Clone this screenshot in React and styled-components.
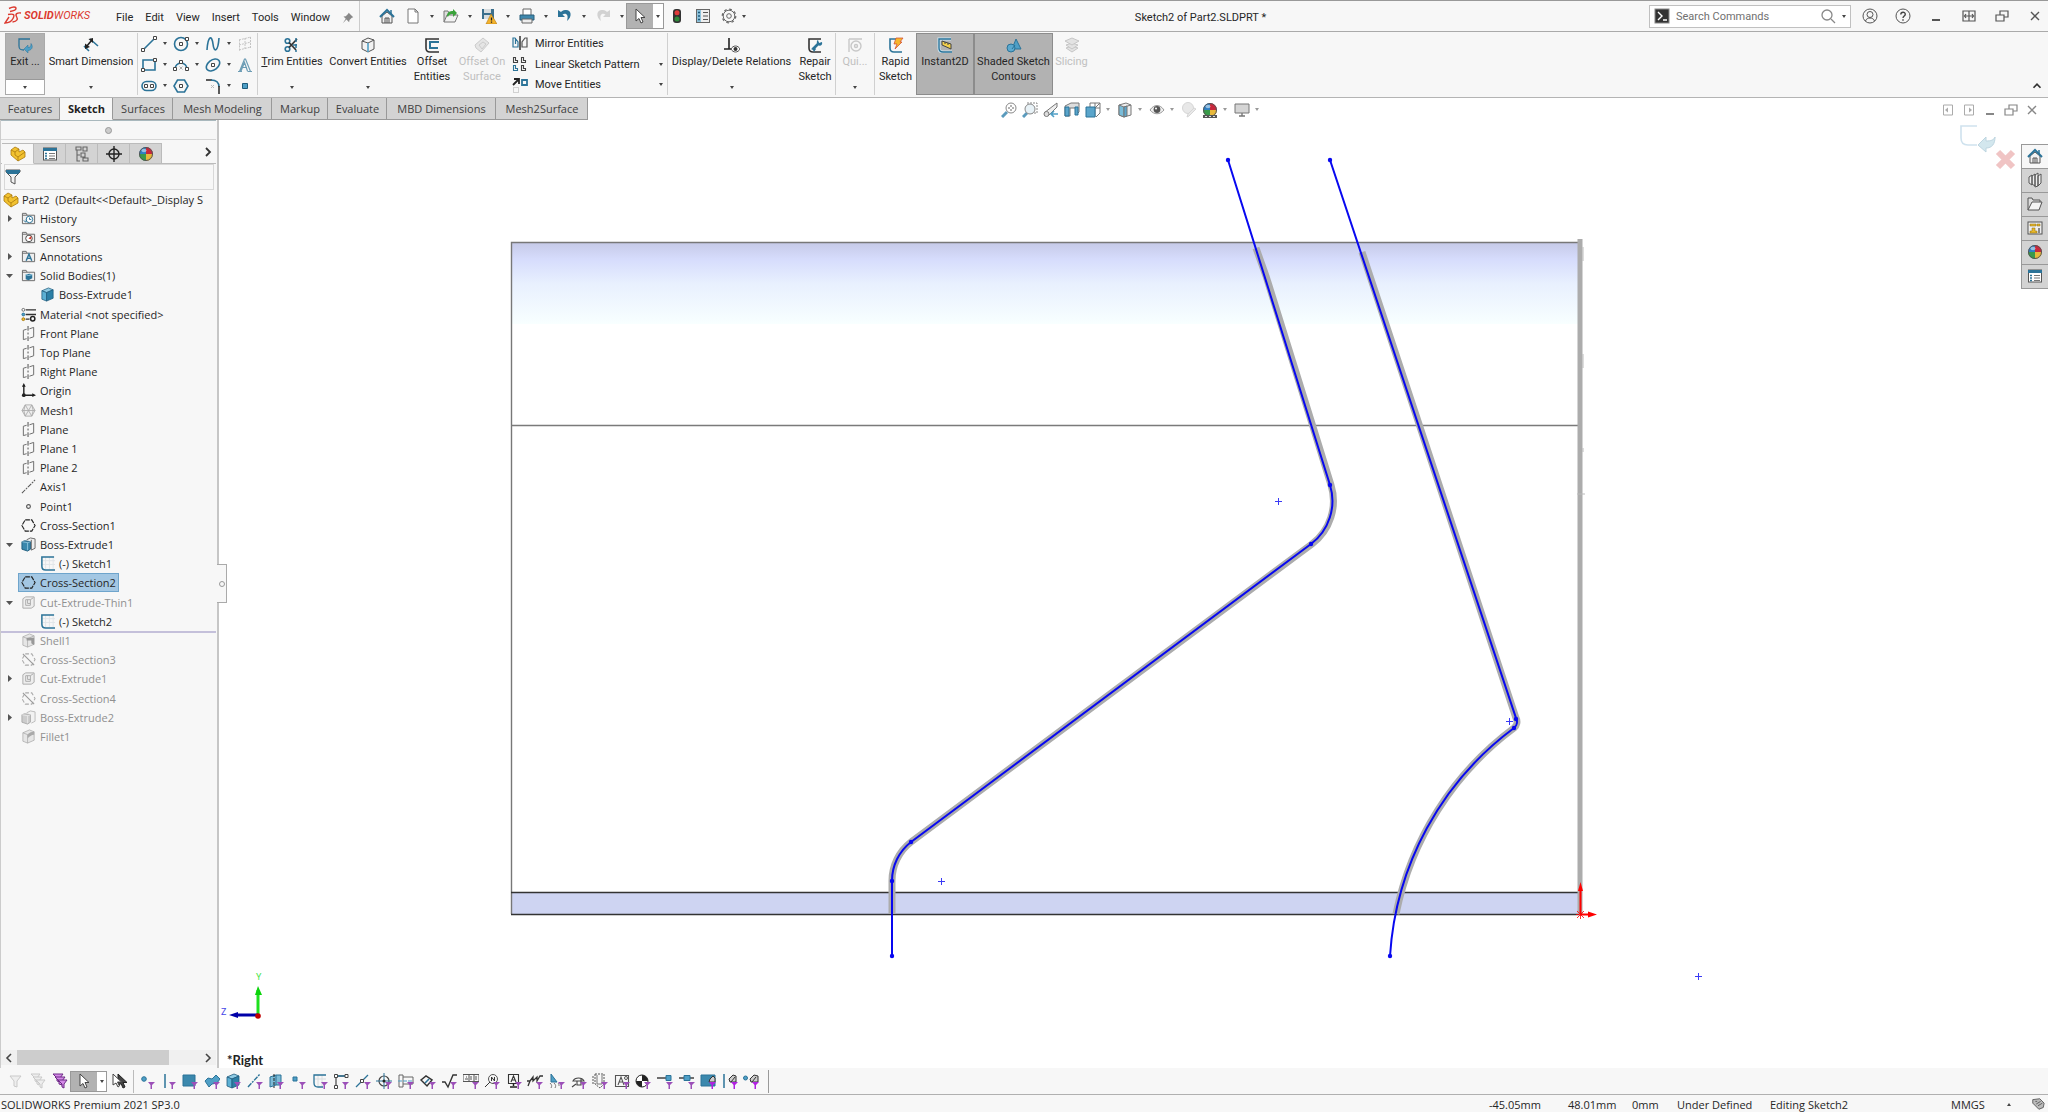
import React, { useState } from "react";
import styled, { createGlobalStyle, css } from "styled-components";

const BLUE = "#2b7398";
const SKY = "#4f9fc6";
const DARK = "#444";
const RIBBON_FONT = `Roboto, "Noto Sans", sans-serif`;
const UI_FONT = `"Open Sans", "Noto Sans", sans-serif`;

// every drawing lives on a 16x16 grid
const line = (stroke = DARK, strokeWidth = 1) => ({
  fill: "none",
  stroke,
  strokeWidth,
});

const hexagon = "M4.5 2h7L15 8l-3.5 6h-7L1 8z";
const planePath = "M2 4l6-2v10l-6 2z M8 2h5v10H8";
const funnel = <path d="M9 9h7l-3 3v4h-1.5v-4z" fill="#9b4fb8" />;
const vividFunnel = <path d="M9 9h7l-3 3v4h-1.5v-4z" fill="#b020e0" />;
const folder = (
  <path d="M1.500 13.500v-11h4l1 2h8v9z M1.500 4.500h5" fill="#eee" stroke="#666" />
);
const ball = (
  <g>
    <path d="M8 8V1a7 7 0 0 1 7 7z" fill="#c8283c" />
    <path d="M8 8h7a7 7 0 0 1-7 7z" fill="#e8b83a" />
    <path d="M8 8v7a7 7 0 0 1-7-7z" fill="#3a9a4a" />
    <path d="M8 8H1a7 7 0 0 1 7-7z" fill="#2f80c4" />
    <circle cx="8" cy="8" r="6.500" {...line("#555")} />
    <ellipse cx="6" cy="4.500" rx="2.500" ry="1.800" fill="#fff" opacity="0.5" />
  </g>
);
const cube = (
  <g stroke="#1f5c7d" strokeWidth="0.8">
    <path d="M2 4l7-3 5 2-7 3z" fill="#8fcbe4" />
    <path d="M2 4l5 2v9l-5-2z" fill="#5cb0d4" />
    <path d="M7 6l7-3v9l-7 3z" fill="#2c7fa6" />
  </g>
);
const part = (
  <g stroke="#a9780c" strokeWidth="0.8">
    <path d="M1 4l4-3 4 2v3l4-2 2 2v5l-7 4-7-6z" fill="#f2c230" />
    <path d="M1 4l4 2v3l3 2v4M5 6l4-3M8 11l7-5" fill="none" />
  </g>
);
const house = (
  <g>
    <path d="M3 8v7h10V8L8 4z" fill="#f2f2f2" stroke="#555" />
    <path d="M6 15v-5h4v5M8 10v5" {...line("#555")} />
    <path d="M1 9l7-7 7 7" {...line(BLUE, 2)} />
    <path d="M12 2v4" {...line(BLUE, 1.5)} />
  </g>
);
const boxGrey = (
  <g stroke="#aaa" strokeWidth="0.8">
    <path d="M2 4l7-3 5 2v9l-7 3-5-2z" fill="#e6e6e6" />
    <path d="M2 4l5 2v9M7 6l7-3" fill="none" />
  </g>
);

const ICONS = {
  home: house,
  newDoc: (
    <path d="M3 1h7l3 3v11H3z M10 1v3h3" fill="#fff" stroke="#777" />
  ),
  open: (
    <g>
      <path d="M1 14V3h4l1 2h6v2" fill="#ddd" stroke="#777" />
      <path d="M1 14l3-7h11l-3 7z" fill="#f2f2f2" stroke="#777" />
      <path d="M4 8c0-4 3-5 6-5V1l4 4-4 4V6C8 6 6 6 5 9z" fill="#3aa23a" />
    </g>
  ),
  save: (
    <g>
      <path d="M1 1h12v10H1z" fill="#3b6f8d" />
      <path d="M3 1h7v4H3z M3 7h7v4H3z" fill="#d8dde0" />
      <path d="M10 6l6 10H5z" fill="#f4b32c" stroke="#b67b10" strokeWidth="0.6" />
      <path d="M10.500 9.500v3M10.500 13.500v1.200" {...line("#222", 1.3)} />
    </g>
  ),
  print: (
    <g>
      <path d="M4 7V1h8v6" fill="#fff" stroke="#666" />
      <path d="M1 7h14v5H1z" fill="#3f88ad" stroke="#2a5f7a" />
      <path d="M3 11h10v4H3z" fill="#eee" stroke="#666" />
    </g>
  ),
  undo: (
    <path d="M1 2v7h7L5.500 6.500C9 4.500 12 7 10 13c6-5 4-12-2-11-2 .3-3 1-4 2z" fill={BLUE} />
  ),
  redo: (
    <path d="M15 2v7H8l2.500-2.500C7 4.500 4 7 6 13 0 8 2 1 8 2c2 .3 3 1 4 2z" fill="#d2d2d2" />
  ),
  cursor: (
    <path d="M4 1v12l3-2.500 2 4.500 2-1-2-4.500h4z" fill="#fff" stroke="#444" />
  ),
  cursorDark: (
    <g>
      <path d="M6 1v12l3-2.500 2 4.500 2-1-2-4.500h4z" fill="#444" stroke="#222" />
      <path d="M1 1v11l3-2 2 4 1.500-1-2-4h4z" fill="#fff" stroke="#444" />
    </g>
  ),
  traffic: (
    <g>
      <rect x="4" y="1" width="8" height="14" rx="3" fill="#333" />
      <circle cx="8" cy="4.800" r="2.500" fill="#e03c3c" />
      <circle cx="8" cy="11" r="2.500" fill="#2f8a3a" />
    </g>
  ),
  options: (
    <g>
      <rect x="1.500" y="1.500" width="13" height="13" fill="#eee" stroke="#666" />
      <path d="M2 2h4v12H2z" fill="#8fc3dc" />
      <path d="M3 4.500h2M3 8h2M3 11.500h2" {...line("#1f5c7d", 1.5)} />
      <path d="M8 4.500h5M8 8h5M8 11.500h5" {...line("#555")} />
    </g>
  ),
  gear: (
    <g>
      <circle cx="8" cy="8" r="5.800" {...line("#666")} />
      <circle cx="8" cy="8" r="6.800" {...line("#666", 1.2)} strokeDasharray="2.700 2.640" />
      <circle cx="8" cy="8" r="2.300" {...line("#666")} />
    </g>
  ),
  pin: (
    <path d="M9 1l6 6-2 .5-3 3-.5 3L6 10l-5 5 4-6-3-3 3-.5 3-3z" fill="#888" />
  ),
  user: (
    <g {...line("#555")}>
      <circle cx="8" cy="8" r="7" />
      <circle cx="8" cy="6.500" r="3" />
      <path d="M3.500 13c1-4 8-4 9 0" />
    </g>
  ),
  help: (
    <g>
      <circle cx="8" cy="8" r="7" {...line("#555")} />
      <path d="M5.800 6.500c0-3 4.500-3 4.500-.3C10.300 8 8 8 8 10M8 11.200v1.500" {...line("#444", 1.4)} />
    </g>
  ),
  min: <path d="M4 12h8" {...line("#555", 2)} />,
  span: (
    <g {...line("#555", 1.2)}>
      <path d="M2 3h12v10H2zM8 3v10M3.500 8h9M5 6L3.500 8 5 10M11 6l1.500 2-1.500 2" />
    </g>
  ),
  restore: (
    <path d="M2 7h8v6H2z M6 7V3h8v6h-4" {...line("#555", 1.2)} />
  ),
  close: <path d="M4 4l8 8M12 4l-8 8" {...line("#555", 1.4)} />,
  paneLeft: (
    <g>
      <path d="M3.500 3v10h9V3z" {...line("#888")} />
      <path d="M8 5.500v5L5 8z" fill="#888" />
    </g>
  ),
  paneRight: (
    <g>
      <path d="M3.500 3v10h9V3z" {...line("#888")} />
      <path d="M8 5.500v5L11 8z" fill="#888" />
    </g>
  ),
  prompt: (
    <g>
      <rect x="1" y="1" width="14" height="14" fill="#333" stroke="#888" />
      <path d="M4 4l4 4-4 4M9 12h4" {...line("#fff", 1.4)} />
    </g>
  ),
  search: (
    <g {...line("#888", 1.3)}>
      <circle cx="7" cy="7" r="5" />
      <path d="M11 11l4 4" />
    </g>
  ),
  up: <path d="M4 10l4-4 4 4" {...line("#333", 2)} />,
  exit: (
    <g>
      <path d="M13 2H2v7c0 3 1 4 5 4" {...line(BLUE, 1.3)} />
      <path d="M7 12l4-4v2.500c2 0 3-1 3-4 3 4 0 7-3 7V16z" fill={SKY} stroke={BLUE} strokeWidth="0.5" />
    </g>
  ),
  dimension: (
    <g>
      <path d="M1 9l5 5M7 2l8 7" {...line(BLUE, 1.6)} />
      <path d="M3 10L9 3" {...line("#222", 1.6)} />
      <path d="M10 1v5L5.500 2zM2 12V6.500L7 10z" fill="#222" />
    </g>
  ),
  line: (
    <g>
      <path d="M2 14L14 2" {...line(BLUE, 1.6)} />
      <path d="M.5 12.500h3v3h-3zM12.500.5h3v3h-3z" fill="#fff" stroke={DARK} />
    </g>
  ),
  circle: (
    <g>
      <circle cx="8" cy="8" r="6.500" {...line(BLUE, 1.6)} />
      <path d="M6.500 6.500h3v3h-3zM12.500 1.500h3v3h-3z" fill="#fff" stroke={DARK} />
    </g>
  ),
  spline: (
    <path d="M2 14C3-1 7-1 8 8s5 8 6-6" {...line(BLUE, 1.6)} />
  ),
  planeDots: (
    <path d="M2.500 3.500v11M8 2v11M13.500 1v11M2 4l12-3M2 9l12-3M2 14l12-3" {...line("#c4c4c4")} strokeDasharray="2 1" />
  ),
  rect: (
    <g>
      <path d="M2 3h12v10H2z" {...line(BLUE, 1.6)} />
      <path d="M.5 11.500h3v3h-3zM12.500 1.500h3v3h-3z" fill="#fff" stroke={DARK} />
    </g>
  ),
  arc: (
    <g>
      <path d="M2 12a6 6 0 0 1 12 0" {...line(BLUE, 1.6)} />
      <path d="M.5 10.500h3v3h-3zM12.500 10.500h3v3h-3zM6.500 3.500h3v3h-3z" fill="#fff" stroke={DARK} />
      <path d="M6.500 9.500l3 3M9.500 9.500l-3 3" {...line("#aaa")} />
    </g>
  ),
  ellipse: (
    <g>
      <ellipse cx="8" cy="8" rx="7.500" ry="5" transform="rotate(-38 8 8)" {...line(BLUE, 1.6)} />
      <path d="M6.500 6.500h3v3h-3z" fill="#fff" stroke={DARK} />
    </g>
  ),
  textA: (
    <path d="M1 14.500h4M2.500 14.500L7.500 2h1l5 12.500M10.500 14.500h4.500M4 14l3.500-8.500 3 8.500M5 10.500h5" {...line("#6d9db5", 1.2)} />
  ),
  slot: (
    <g>
      <rect x="1" y="3.500" width="14" height="9" rx="4.500" {...line(BLUE, 1.6)} />
      <path d="M3.500 6.500h3v3h-3zM9.500 6.500h3v3h-3z" fill="#fff" stroke={DARK} />
    </g>
  ),
  polygon: (
    <g>
      <path d={hexagon} {...line(BLUE, 1.6)} />
      <path d="M6.500 6.500h3v3h-3z" fill="#fff" stroke={DARK} />
    </g>
  ),
  fillet: (
    <g>
      <path d="M1 2h6" {...line("#333", 1.6)} />
      <path d="M6 2c5 0 8 2 8 7" {...line(BLUE, 1.6)} />
      <path d="M14 8v8" {...line("#333", 1.6)} />
      <path d="M6 7l3 3M9 7l-3 3" {...line("#bbb")} />
    </g>
  ),
  point: <path d="M5.500 5.500h5v5h-5z" fill={SKY} stroke="#1f5c7d" />,
  trim: (
    <g>
      <circle cx="3.500" cy="4" r="2.300" {...line(BLUE, 1.6)} />
      <circle cx="3.500" cy="12" r="2.300" {...line(BLUE, 1.6)} />
      <path d="M5 5.500L12 13M5 10.500L13 2" {...line("#333", 1.7)} />
      <path d="M9 8h6M12 1v14" {...line(BLUE, 1.5)} strokeDasharray="4 2" />
    </g>
  ),
  convert: (
    <g>
      <path d="M2 4l6-3 6 2v9l-6 3-6-3z M2 4l6 2 6-3" fill="#f2f2f2" stroke="#555" />
      <path d="M8 6v9" {...line(SKY, 1.6)} />
    </g>
  ),
  offset: (
    <g>
      <path d="M15 2H2v9c0 3 1 4 4 4h9" {...line("#333", 1.6)} />
      <path d="M15 5H6v6h8" {...line(BLUE, 2)} />
    </g>
  ),
  offsetSurface: (
    <path d="M1 8l8-7 6 5-8 9-5-4zM5 8l4-3 3 2-4 5z" fill="#e5e5e5" stroke="#ccc" />
  ),
  mirror: (
    <g>
      <path d="M8 1v14" {...line("#222", 1.4)} />
      <path d="M1 3h2l3 4v5H1zM3.500 3v6" {...line(BLUE, 1.2)} />
      <path d="M15 3h-2l-3 4v5h5z" {...line("#555", 1.2)} />
    </g>
  ),
  pattern: (
    <g {...line("#444", 1.1)}>
      <path d="M1.500 1.500v5h4v-2h-2v-3zM9.500 1.500v5h4v-2h-2v-3zM9.500 9.500v5h4v-2h-2v-3z" />
      <path d="M1.500 9.500v5h4v-2h-2v-3z" stroke={BLUE} />
    </g>
  ),
  move: (
    <g>
      <path d="M1 8l5-5M2 2h5v5" {...line("#222", 1.8)} />
      <path d="M10 3h5v5h-5z" {...line(BLUE, 1.8)} />
      <path d="M1.500 10.500h5v5h-5z" {...line("#aaa")} strokeDasharray="1 1" />
    </g>
  ),
  relations: (
    <g>
      <path d="M5 1v11M0 12h10" {...line("#222", 1.6)} />
      <path d="M7 12c2-4 7-4 9 0-2 4-7 4-9 0z" fill="#fff" stroke="#555" />
      <circle cx="11.500" cy="12" r="2" fill="#333" />
    </g>
  ),
  repair: (
    <g>
      <path d="M14 2H2v9c0 3 1 4 4 4h8" {...line("#333", 1.6)} />
      <path d="M6 12l6-6" {...line(BLUE, 2.6)} />
      <path d="M11 3l1 3 3-1c1 3-2 5-4 3s-1-5 0-5zM4 12l3-2 2 2-2 3-1-2z" fill={BLUE} />
    </g>
  ),
  quick: (
    <g {...line("#c8c8c8", 1.4)}>
      <path d="M2 2h13M2 2v13" />
      <circle cx="9" cy="9" r="5" />
      <circle cx="9" cy="9" r="1.500" />
    </g>
  ),
  rapid: (
    <g>
      <path d="M13 2H2v9c0 3 1 4 4 4h8" {...line(BLUE, 1.6)} />
      <path d="M8 1h7l-3 4h2l-7 7 2-5H6z" fill="#f6b62c" stroke="#d0462c" strokeWidth="0.7" />
    </g>
  ),
  instant: (
    <g>
      <path d="M14 2H2v9c0 3 1 4 4 4h9" {...line("#cfe6f2", 3)} />
      <path d="M14 2H2v9c0 3 1 4 4 4h9" {...line(BLUE, 1.4)} />
      <path d="M5 4l9 3v5L5 8z" fill="#f4d04a" stroke="#444" />
      <path d="M8 5v2M11 6v2" {...line("#444")} />
    </g>
  ),
  shaded: (
    <g>
      <path d="M10 2l5 10H6z" fill={SKY} stroke={BLUE} />
      <circle cx="5" cy="11" r="4" fill="#5ba9cf" stroke={BLUE} />
      <path d="M6 12l3-4" {...line(BLUE)} />
    </g>
  ),
  slicing: (
    <g fill="#e3e3e3" stroke="#c6c6c6">
      <path d="M2 11l6-2 6 2-6 4z" />
      <path d="M2 8l6-2 6 2-6 4z" />
      <path d="M1 4l7-3 7 3-7 4z" />
    </g>
  ),
  zoomFit: (
    <g>
      <path d="M1 15l5-5" {...line("#5b9bbd", 3)} />
      <circle cx="10" cy="6" r="5" fill="#fff" stroke="#888" />
      <path d="M10 3v6M7 6h6" {...line("#666")} strokeDasharray="2 2" />
    </g>
  ),
  zoomArea: (
    <g>
      <path d="M5 1h10v10H9" {...line("#888")} strokeDasharray="2 1" />
      <path d="M1 15l4-4" {...line("#5b9bbd", 3)} />
      <circle cx="8" cy="7" r="5" fill="#e8f2f7" stroke="#888" />
    </g>
  ),
  prevView: (
    <g>
      <path d="M1 11l9-7 4-3v4L5 14z" fill="#eee" stroke="#777" />
      <circle cx="3.500" cy="12" r="2.500" fill="#ddd" stroke="#777" />
      <path d="M15 12H9M11 9l-3 3 3 3" {...line(SKY, 1.6)} />
    </g>
  ),
  section: (
    <g>
      <path d="M1 4l6-3h8v9l-3 3V6H6v8H1z" fill="#ddd" stroke="#777" />
      <path d="M1 5h4v9H1zM11 5h3v8h-3z" fill="#5aa5cb" stroke={BLUE} />
    </g>
  ),
  orient: (
    <g>
      <path d="M5 1h10v10l-4 4M5 1v5M10 1v14M5 6h10M15 1l-5 5" {...line("#777")} />
      <path d="M1 5h9v10H1z" fill="#5aa5cb" stroke={BLUE} />
    </g>
  ),
  display: (
    <g stroke="#777">
      <path d="M2 3l7-2 5 2v10l-7 2-5-2z" fill="#eee" />
      <path d="M2 3l5 2v10l-5-2z" fill="#79bcd9" />
      <path d="M7 5l7-2" fill="none" />
      <path d="M7 5l3-1v10l-3 1z" fill="#5aa5cb" />
    </g>
  ),
  eye: (
    <g>
      <path d="M1 8c4-6 10-6 14 0-4 5-10 5-14 0z" fill="#eee" stroke="#999" />
      <circle cx="8" cy="7.500" r="3.400" fill="#555" />
      <circle cx="7" cy="6.500" r="1" fill="#fff" />
    </g>
  ),
  appearance: (
    <g fill="#e8e8e8" stroke="#d6d6d6">
      <circle cx="7" cy="6" r="5.500" />
      <path d="M15 7l-7 7-2 1 1-3 6-6z" />
    </g>
  ),
  scene: (
    <g>
      {ball}
      <path d="M1 13h14v3H1z" fill="#555" />
      <path d="M3 14h2v1H3zM7 14h2v1H7zM11 14h2v1h-2z" fill="#ddd" />
    </g>
  ),
  monitor: (
    <g>
      <path d="M1 2h14v9H1z" fill="#d5d5d5" stroke="#777" />
      <path d="M8 11v3M5 14h6" {...line("#777", 1.4)} />
    </g>
  ),
  library: (
    <g fill="#eee" stroke="#555">
      <path d="M2 5l3-2v10l-3-2zM5 4l3-2v12l-3-2zM8 3l3-2v13l-3 1zM11 4l3-2v9l-3 3z" />
    </g>
  ),
  folderOpen: (
    <g>
      <path d="M1 14V2h4l1 2h7v3" fill="#ddd" stroke="#555" />
      <path d="M1 14l4-8h10l-3 8z" fill="#f4f4f4" stroke="#555" />
    </g>
  ),
  palette: (
    <g>
      <rect x="1" y="2" width="14" height="12" fill="#eee" stroke="#555" />
      <path d="M3 4h6v2H3zM10 4h3v2h-3zM5 8h3v3h2v2H3v-2h2z" fill="#e8b82a" stroke="#8a6a10" strokeWidth="0.5" />
      <path d="M11 8h2v5h-2z" fill="#888" />
    </g>
  ),
  ball,
  props: (
    <g>
      <rect x="1.500" y="2" width="13" height="12" fill="#fff" stroke="#555" />
      <path d="M1 2h14v3H1z" fill={BLUE} />
      <path d="M3 7.500h2M3 10h2M3 12.500h2" {...line(BLUE, 1.6)} />
      <path d="M7 7.500h6M7 10h6M7 12.500h6" {...line("#777")} />
    </g>
  ),
  config: (
    <g {...line("#666", 1.1)}>
      <path d="M2 1h5v3H2zM3 4v11h3M3 9h3M7 7h4v4H7zM9 12h5v3H9zM9 1h4v4H9z" />
    </g>
  ),
  part,
  target: (
    <g {...line("#222", 1.4)}>
      <circle cx="8" cy="8" r="5" />
      <path d="M8 0v16M0 8h16" />
    </g>
  ),
  filter: (
    <g>
      <path d="M1 1h14v2l-5 5v7l-4-2V8L1 3z" fill="#f2f2f2" stroke="#555" />
      <path d="M1 1h14v2l-2 2H3L1 3z" fill={BLUE} />
    </g>
  ),
  history: (
    <g>
      {folder}
      <circle cx="9" cy="9" r="3.500" fill="#fff" stroke={BLUE} />
      <path d="M9 7v2h2M3 10l2 2 1-3" {...line(BLUE)} />
    </g>
  ),
  sensors: (
    <g>
      {folder}
      <circle cx="8.500" cy="9" r="3.500" fill="#fff" stroke="#444" />
      <path d="M8 9l3-3v4z" fill="#d43a2c" />
    </g>
  ),
  annotations: (
    <g>
      {folder}
      <path d="M5.500 12.500l3-7 3 7M6.500 10h4" {...line(BLUE, 1.5)} />
    </g>
  ),
  bodies: (
    <g>
      {folder}
      <path d="M5 7l4-1 3 1v4l-4 2-3-1z" fill={BLUE} />
      <path d="M5 7l3 1 4-1" {...line("#9fd0e6")} />
    </g>
  ),
  cube,
  material: (
    <g>
      <circle cx="2.500" cy="3" r="1.500" fill="#fff" stroke="#666" />
      <circle cx="2.500" cy="8" r="1.500" fill={SKY} stroke={BLUE} />
      <circle cx="2.500" cy="13" r="1.500" fill="#f2c230" stroke="#a9780c" />
      <path d="M5 3h11M5 8h11M5 13h4" {...line("#333", 1.4)} />
      <circle cx="12.500" cy="12.500" r="2.300" {...line("#222", 1.6)} />
    </g>
  ),
  plane: (
    <g>
      <path d="M6 3.500l-3.500 1v10L6 13.500M9 3l4.500-1.500v10L9 13" {...line("#666")} />
      <path d="M7.500 0v16" {...line("#444")} strokeDasharray="5 2 2 2" />
    </g>
  ),
  origin: (
    <g>
      <path d="M3 2v11h11" {...line("#222", 1.5)} />
      <path d="M3 0l2 4H1zM16 13l-4-2v4z" fill="#222" />
      <circle cx="3" cy="13" r="2" fill="#222" />
    </g>
  ),
  mesh: (
    <g {...line("#aaa", 0.9)}>
      <path d={hexagon} fill="#eee" />
      <path d="M4.500 2l7 12M11.500 2l-7 12M1 8h14M4.500 2L3 8l1.500 6M11.500 2L13 8l-1.500 6" />
    </g>
  ),
  axis: <path d="M1 15L15 1" {...line("#555", 1.1)} strokeDasharray="5 1 2 1" />,
  pt: <circle cx="8" cy="8" r="2" {...line("#555", 1.2)} />,
  cross: (
    <path d={hexagon} {...line("#222", 1.2)} strokeDasharray="5 1" />
  ),
  boss: (
    <g>
      <path d="M6 3l4-2 5 1v10l-4 2" fill="#eee" stroke="#666" />
      <path d="M11 3v11" {...line("#666")} />
      <path d="M1 5l3-1 6 1v8l-3 2-6-2z" fill="#3b88ad" stroke="#1f5c7d" />
      <path d="M1 5l6 1 3-1M7 6v8" {...line("#9fd0e6", 0.8)} />
    </g>
  ),
  sketch: (
    <g>
      <path d="M6 1v13M10 1v13M14 1v13M2 5h14M2 9h14" {...line("#e0e4e8")} />
      <path d="M15 1H2v10c0 3 1 4 4 4h10" {...line(BLUE, 1.6)} />
    </g>
  ),
  cutGrey: (
    <g>
      <path d="M2 4l3-2h9v10l-3 2H2z" fill="#eee" stroke="#aaa" />
      <path d="M5 5h5v6H5zM10 5l3-2M7 5v4h3" {...line("#aaa")} />
    </g>
  ),
  shellGrey: (
    <g>
      {boxGrey}
      <path d="M6 5h8v8l-3-2V8H6z" fill="#999" />
    </g>
  ),
  crossGrey: (
    <g>
      <path d={hexagon} {...line("#aaa", 1.1)} strokeDasharray="4 2" />
      <path d="M2 2l12 12" {...line("#999", 1.2)} />
    </g>
  ),
  bossGrey: (
    <g>
      <path d="M6 3l4-2 5 1v10l-4 2" fill="#f2f2f2" stroke="#bbb" />
      <path d="M1 5l3-1 6 1v8l-3 2-6-2z" fill="#ccc" stroke="#aaa" />
      <path d="M1 5l6 1 3-1M7 6v8" {...line("#eee", 0.8)} />
    </g>
  ),
  filletGrey: (
    <g>
      {boxGrey}
      <path d="M7 7c1-3 4-4 7-4v3c-3 0-5 2-7 4z" fill="#aaa" />
    </g>
  ),
  fOff: <path d="M2 3h11L9 8v6l-3-1V8z" fill="#eee" stroke="#c9c9c9" />,
  fOffs: (
    <g fill="#eee" stroke="#c9c9c9">
      <path d="M1 1h9L7 5v4L5 8V5z" />
      <path d="M3 4h9L9 8v4l-2-1V8z" />
      <path d="M6 7h9l-3 4v4l-2-1v-3z" />
    </g>
  ),
  fAll: (
    <g fill="#d58ae8" stroke="#6d2a86">
      <path d="M1 1h10L8 5v4L5 8V5z" />
      <path d="M3 4h10l-3 4v4L7 11V8z" />
      <path d="M6 7h9l-3 4v4l-2-1v-3z" />
    </g>
  ),
  fVertex: <g><circle cx="5" cy="6" r="2.300" fill={SKY} stroke={BLUE} />{funnel}</g>,
  fEdge: <g><path d="M5 1v14" {...line(BLUE, 1.5)} />{funnel}</g>,
  fFace: <g><path d="M1 2h12v11H1z" fill="#3b88ad" stroke={BLUE} />{funnel}</g>,
  fSurface: <g><path d="M1 8l3-3 4 1 4-4 4 4-3 4-5 1-3 3z" fill="#4f9fc6" stroke={BLUE} />{funnel}</g>,
  fSolid: <g>{cube}{funnel}</g>,
  fAxis: <g><path d="M1 14L13 1" {...line(BLUE, 1.4)} strokeDasharray="5 1 2 1" />{funnel}</g>,
  fPlane: <g><path d={planePath} fill="#7dbbd6" stroke={BLUE} /><path d="M6 1v14" {...line("#222")} strokeDasharray="3 1" />{funnel}</g>,
  fPoint: <g><path d="M3 4h4v4H3z" fill={SKY} stroke={BLUE} />{funnel}</g>,
  fSketch: <g><path d="M6 2v11M10 2v11M2 6h12" {...line("#d8dde0")} /><path d="M14 2H2v8c0 3 1 4 4 4h5" {...line(BLUE, 1.3)} />{funnel}</g>,
  fSeg: <g><path d="M3 14V3h10" {...line("#555", 1.3)} /><path d="M5 3h8" {...line(BLUE, 1.4)} /><path d="M1.500 1.500h3v3h-3zM12 1.500h3v3h-3zM1.500 12.500h3v3h-3z" fill="#fff" stroke="#444" />{funnel}</g>,
  fMid: <g><path d="M1 14L13 2" {...line(BLUE, 1.3)} /><path d="M5.500 6.500h3v3h-3z" fill="#fff" stroke="#444" />{funnel}</g>,
  fCenter: <g><circle cx="8" cy="8" r="5" {...line("#444", 1.2)} /><path d="M8 0v16M0 8h16" {...line(BLUE)} /><circle cx="8" cy="8" r="1.500" fill="#222" />{funnel}</g>,
  fCenterline: <g><path d="M1 2h4v12H1zM5 4h10v7H5" {...line("#666")} /><path d="M0 8h15" {...line(SKY)} strokeDasharray="4 1" />{funnel}</g>,
  fDim: <g><path d="M1 7l5-4 6 4-5 6z" {...line("#333", 1.5)} /><path d="M5 10l4-4" {...line(BLUE, 1.6)} />{funnel}</g>,
  fFinish: <g><path d="M1 9h3l3 5 5-12h4" {...line("#333", 1.4)} />{funnel}</g>,
  fTol: <g><path d="M0 1.500h16v7H0zM6 2v6M11 2v6M2 6h3M3 4h1M8 3v4M13 3v4" {...line("#555")} />{funnel}</g>,
  fNote: <g><circle cx="9" cy="6" r="4.500" {...line("#555")} /><path d="M1 14l5-5M7.500 8V4l3 4V4" {...line("#333")} />{funnel}</g>,
  fDatum: <g><path d="M2.500 1.500h10v9h-10zM5 9l2.500-6L10 9M6 7h3" {...line("#333", 1.1)} /><path d="M7.500 10v3M4 14h7" {...line("#222", 1.5)} />{funnel}</g>,
  fWeld: <g><path d="M0 8h3l3-4v4l4-4v4l3-5h3M3 8l-2 5" {...line("#333", 1.3)} />{funnel}</g>,
  fBead: <g><path d="M2 1v8h6z" fill={SKY} stroke={BLUE} /><path d="M1 10c2 2 2 3 1 5M5 10c2 2 2 3 1 5M9 10c1 1 1 2 1 3" {...line("#777")} />{funnel}</g>,
  fBlock: <g><path d="M2 8a6 5 0 0 1 11 0zM1 14l4-3M6 8v4h4V6" {...line("#444", 1.1)} />{funnel}</g>,
  fCosmetic: <g><path d="M3 1h9v10l-4 4-5-4zM1 3v8" {...line("#555")} strokeDasharray="2 1" /><path d="M5 2v9h5V2" {...line("#777")} />{funnel}</g>,
  fBalloon: <g><path d="M1.500 2.500h13v11h-13zM4 12l3-8 3 8M5 9h4" {...line("#555", 1.1)} /><circle cx="12" cy="5" r="1.500" {...line("#555")} />{funnel}</g>,
  fMass: <g><circle cx="7" cy="8" r="6" fill="#fff" stroke="#222" /><path d="M7 8V2a6 6 0 0 1 6 6zM7 8v6a6 6 0 0 1-6-6z" fill="#222" />{funnel}</g>,
  fRoute: <g><path d="M0 5h9" {...line("#333", 1.4)} /><path d="M9 2.500h5v5H9z" fill={SKY} stroke={BLUE} />{funnel}</g>,
  fRouteMid: <g><path d="M0 5h15" {...line("#333", 1.4)} /><path d="M5 2.500h6v5H5z" fill={SKY} stroke={BLUE} />{funnel}</g>,
  fMeshFace: <g><path d="M1 2h14v11H1z" fill="#3b88ad" stroke={BLUE} /><path d="M10 6l3-3 2 2v4H9z" fill="#ccc" stroke="#333" />{vividFunnel}</g>,
  fMeshEdge: <g><path d="M2 1v14" {...line(BLUE, 1.5)} /><path d="M7 6l4-4 3 1v6H8zM9 9l4-5" fill="#ccc" stroke="#333" />{vividFunnel}</g>,
  fMeshVertex: <g><circle cx="2.500" cy="5" r="2" fill={SKY} stroke={BLUE} /><path d="M7 6l4-4 4 1v6H8zM9 9l4-5" fill="#ccc" stroke="#333" />{vividFunnel}</g>,
  tag: <path d="M2 3l8-1 5 5-1 5-5 2-7-7zM5 5h2M6 8l5-3M8 10l5-3" fill="#bbb" stroke="#555" />,
};

const Icon = ({ name, size = 16 }) => (
  <svg width={size} height={size} viewBox="0 0 16 16" aria-hidden="true">
    {ICONS[name]}
  </svg>
);

const RIBBON_TOOLS = [
  ["line", "circle", "spline", "planeDots"],
  ["rect", "arc", "ellipse", "textA"],
  ["slot", "polygon", "fillet", "point"],
];
const NO_CARET = ["planeDots", "textA", "point", "polygon"];

const TABS = [
  ["Features", 60],
  ["Sketch", 53],
  ["Surfaces", 60],
  ["Mesh Modeling", 99],
  ["Markup", 56],
  ["Evaluate", 59],
  ["MBD Dimensions", 109],
  ["Mesh2Surface", 92],
];

const TREE = [
  { icon: "history", label: "History", arrow: "right" },
  { icon: "sensors", label: "Sensors" },
  { icon: "annotations", label: "Annotations", arrow: "right" },
  { icon: "bodies", label: "Solid Bodies(1)", arrow: "down" },
  { icon: "cube", label: "Boss-Extrude1", level: 1 },
  { icon: "material", label: "Material <not specified>" },
  { icon: "plane", label: "Front Plane" },
  { icon: "plane", label: "Top Plane" },
  { icon: "plane", label: "Right Plane" },
  { icon: "origin", label: "Origin" },
  { icon: "mesh", label: "Mesh1" },
  { icon: "plane", label: "Plane" },
  { icon: "plane", label: "Plane 1" },
  { icon: "plane", label: "Plane 2" },
  { icon: "axis", label: "Axis1" },
  { icon: "pt", label: "Point1" },
  { icon: "cross", label: "Cross-Section1" },
  { icon: "boss", label: "Boss-Extrude1", arrow: "down" },
  { icon: "sketch", label: "(-) Sketch1", level: 1 },
  { icon: "cross", label: "Cross-Section2" },
  { icon: "cutGrey", label: "Cut-Extrude-Thin1", arrow: "down", muted: true },
  { icon: "sketch", label: "(-) Sketch2", level: 1, rollback: true },
  { icon: "shellGrey", label: "Shell1", muted: true },
  { icon: "crossGrey", label: "Cross-Section3", muted: true },
  { icon: "cutGrey", label: "Cut-Extrude1", arrow: "right", muted: true },
  { icon: "crossGrey", label: "Cross-Section4", muted: true },
  { icon: "bossGrey", label: "Boss-Extrude2", arrow: "right", muted: true },
  { icon: "filletGrey", label: "Fillet1", muted: true },
];

const FILTERS = [
  "fVertex", "fEdge", "fFace", "fSurface", "fSolid", "fAxis", "fPlane",
  "fPoint", "fSketch", "fSeg", "fMid", "fCenter", "fCenterline", "fDim",
  "fFinish", "fTol", "fNote", "fDatum", "fWeld", "fBead", "fBlock",
  "fCosmetic", "fBalloon", "fMass", "fRoute", "fRouteMid", "fMeshFace",
  "fMeshEdge", "fMeshVertex",
];

const QUICK = [
  ["home", 26, "Welcome"],
  ["newDoc", 38, "New"],
  ["open", 38, "Open"],
  ["save", 38, "Save"],
  ["print", 38, "Print"],
  ["undo", 38, "Undo"],
  ["redo", 31, "Redo"],
];

const HEADS_UP = [
  ["zoomFit"], ["zoomArea"], ["prevView"], ["section"], ["orient", true],
  ["display", true], ["eye", true], ["appearance"], ["scene", true],
  ["monitor", true],
];

const LEFT_PROFILE =
  "M1228 160L1330 485A54 54 0 0 1 1311 544L911 842A49 49 0 0 0 892 881V956";
const RIGHT_PROFILE =
  "M1330 160L1516 718A8 8 0 0 1 1514 728A308 308 0 0 0 1390 956";

const Drawing = () => (
  <Canvas viewBox="219 120 1829 948" preserveAspectRatio="xMinYMin meet">
    <defs>
      <linearGradient id="sheen" x1="0" y1="0" x2="0" y2="1">
        <stop offset="0" stopColor="#c6cae8" />
        <stop offset="0.2" stopColor="#d6dcfc" />
        <stop offset="0.5" stopColor="#e8f0fe" />
        <stop offset="1" stopColor="#f8ffff" />
      </linearGradient>
    </defs>
    <rect x="511" y="243" width="1068" height="81" fill="url(#sheen)" />
    <rect x="511" y="892" width="1068" height="22" fill="#ced4f2" />
    <path d="M511.500 914V242.500H1579" {...line("#777", 1.4)} />
    <path d="M511 425.500H1579" {...line("#7a7a7a", 1.4)} />
    <path d="M511 892.500H1579M511 914.500H1579" {...line("#333", 1.4)} />
    <path d="M1580 239V914" {...line("#acacac", 5)} />
    <path d="M1583 247v14M1583 354v14M1583 448v4M1577 494h8" {...line("#bbb")} />
    <g {...line("#acacac", 7)}>
      <path d="M1256 248L1266 276L1314 430L1331 485A54 54 0 0 1 1312 544L911 842A49 49 0 0 0 892 881V914" />
      <path d="M1362 252L1420 427L1516 718A8 8 0 0 1 1514 728A308 308 0 0 0 1396 914" />
    </g>
    <path d={LEFT_PROFILE} {...line("#0808f0", 2)} />
    <path d={RIGHT_PROFILE} {...line("#0808f0", 2)} />
    {[
      [1228, 160], [1330, 160], [1330, 485], [1311, 544], [911, 842],
      [892, 881], [892, 956], [1516, 719], [1514, 728], [1390, 956],
    ].map(([x, y]) => (
      <circle key={`${x}-${y}`} cx={x} cy={y} r="2.200" fill="#0808f0" />
    ))}
    {[[1278, 501], [941, 881], [1509, 721], [1698, 976]].map(([x, y]) => (
      <path
        key={`${x}-${y}`}
        d={`M${x - 3} ${y + 0.5}h7M${x + 0.5} ${y - 3}v7`}
        {...line("#3a3af5")}
      />
    ))}
    <g stroke="#f00" fill="#f00">
      <path d="M1580.500 914V888M1580 914.500h12" strokeWidth="2" />
      <path d="M1580.500 882l2.500 9h-5zM1597 914.500l-9-3v6z" stroke="none" />
      <path d="M1577 911l7 7M1584 911l-7 7M1576 914.500h8M1580.500 911v8" strokeWidth="0.8" />
    </g>
    <path d="M258 1015V990" stroke="#1ee01e" strokeWidth="3" />
    <path d="M258 986l4 9h-7z" fill="#0bd40b" />
    <path d="M258 1015H236" stroke="#0000a8" strokeWidth="3" />
    <path d="M229 1015l9-3v6z" fill="#0000a8" />
    <circle cx="258" cy="1016" r="2.800" fill="#c00000" />
    <AxisText x="256" y="980" fill="#49e549">Y</AxisText>
    <AxisText x="221" y="1015" fill="#4646e8">Z</AxisText>
  </Canvas>
);

const App = () => {
  const [tab, setTab] = useState("Sketch");
  const [selected, setSelected] = useState(19);

  return (
    <Page>
      <GlobalStyle />
      <TitleBar>
        <Brand>
          <svg width="18" height="18" viewBox="0 0 18 18" aria-hidden="true">
            <g {...line("#dc3a30", 1.4)}>
              <path d="M5 2.500c4-2 7-2 7 0S9 5 6 5.500" />
              <path d="M4 8.500c6-1 7 0 5 4-1.500 3-4 4.500-8 4.500l4-6" />
              <path d="M17 7c-4-.5-6 1-4.500 3.500s1 5-4 5.500" />
            </g>
          </svg>
          <BrandName>
            <b>SOLID</b>WORKS
          </BrandName>
        </Brand>
        <Menu>
          {["File", "Edit", "View", "Insert", "Tools", "Window"].map((item) => (
            <MenuButton key={item}>{item}</MenuButton>
          ))}
          <IconButton aria-label="Pin menu">
            <Icon name="pin" size={12} />
          </IconButton>
        </Menu>
        <QuickBar>
          {QUICK.map(([name, width, label]) => (
            <QuickItem key={name} $width={width}>
              <IconButton aria-label={label}>
                <Icon name={name} />
              </IconButton>
              {name !== "home" && <Caret />}
            </QuickItem>
          ))}
          <SelectTool>
            <PressedButton aria-label="Select">
              <Icon name="cursor" />
            </PressedButton>
            <CaretButton aria-label="Select options">
              <Caret />
            </CaretButton>
          </SelectTool>
          {["traffic", "options", "gear"].map((name) => (
            <WideIconButton key={name} aria-label={name}>
              <Icon name={name} />
            </WideIconButton>
          ))}
          <Caret />
        </QuickBar>
        <DocTitle>Sketch2 of Part2.SLDPRT *</DocTitle>
        <TitleRight>
          <SearchBox>
            <Icon name="prompt" />
            <input type="text" aria-label="Search Commands" placeholder="Search Commands" />
            <Icon name="search" />
            <Caret />
          </SearchBox>
          <WindowButtons>
            {["user", "help", "min", "span", "restore", "close"].map((name) => (
              <IconButton key={name} aria-label={name}>
                <Icon name={name} />
              </IconButton>
            ))}
          </WindowButtons>
        </TitleRight>
      </TitleBar>

      <Ribbon>
        <ExitButton>
          <ExitFace>
            <Icon name="exit" />
            <span>Exit ...</span>
          </ExitFace>
          <ExitMore>
            <Caret />
          </ExitMore>
        </ExitButton>
        <Command $width={92}>
          <Icon name="dimension" />
          <span>Smart Dimension</span>
          <Caret />
        </Command>
        <Divider />
        <ToolGrid>
          {RIBBON_TOOLS.flat().map((name) => (
            <ToolCell key={name} aria-label={name}>
              <Icon name={name} />
              {!NO_CARET.includes(name) && <Caret />}
            </ToolCell>
          ))}
        </ToolGrid>
        <Divider />
        <Command $width={68}>
          <Icon name="trim" />
          <span>
            <u>T</u>rim Entities
          </span>
          <Caret />
        </Command>
        <Command $width={84}>
          <Icon name="convert" />
          <span>Convert Entities</span>
          <Caret />
        </Command>
        <Command $width={44}>
          <Icon name="offset" />
          <span>Offset Entities</span>
        </Command>
        <Command $width={56} disabled>
          <Icon name="offsetSurface" />
          <span>Offset On Surface</span>
        </Command>
        <CommandList>
          {[
            ["mirror", "Mirror Entities"],
            ["pattern", "Linear Sketch Pattern", true],
            ["move", "Move Entities", true],
          ].map(([name, label, caret]) => (
            <ListCommand key={name}>
              <Icon name={name} />
              <span>{label}</span>
              {caret && <Caret />}
            </ListCommand>
          ))}
        </CommandList>
        <Divider />
        <Command $width={127}>
          <Icon name="relations" />
          <span>Display/Delete Relations</span>
          <Caret />
        </Command>
        <Command $width={40}>
          <Icon name="repair" />
          <span>Repair Sketch</span>
        </Command>
        <Divider />
        <Command $width={38} disabled>
          <Icon name="quick" />
          <span>Qui...</span>
          <Caret />
        </Command>
        <Divider />
        <Command $width={41}>
          <Icon name="rapid" />
          <span>Rapid Sketch</span>
        </Command>
        <Command $width={58} $pressed>
          <Icon name="instant" />
          <span>Instant2D</span>
        </Command>
        <Command $width={79} $pressed>
          <Icon name="shaded" />
          <span>Shaded Sketch Contours</span>
        </Command>
        <Command $width={37} disabled>
          <Icon name="slicing" />
          <span>Slicing</span>
        </Command>
        <Collapse aria-label="Collapse ribbon">
          <Icon name="up" size={14} />
        </Collapse>
      </Ribbon>

      <TabRow>
        <Tabs role="tablist">
          {TABS.map(([label, width]) => (
            <Tab
              key={label}
              role="tab"
              aria-selected={tab === label}
              $active={tab === label}
              $width={width}
              onClick={() => setTab(label)}
            >
              {label}
            </Tab>
          ))}
        </Tabs>
        <Spacer $grow={38} />
        <HeadsUp>
          {HEADS_UP.map(([name, caret]) => (
            <HeadsUpItem key={name} aria-label={name} $caret={caret}>
              <Icon name={name} />
              {caret && <Caret />}
            </HeadsUpItem>
          ))}
        </HeadsUp>
        <Spacer $grow={62} />
        <DocButtons>
          {["paneLeft", "paneRight", "min", "restore", "close"].map((name) => (
            <IconButton key={name} aria-label={`Document ${name}`}>
              <Icon name={name} />
            </IconButton>
          ))}
        </DocButtons>
      </TabRow>

      <Workspace>
        <SidePanel>
          <PanelGrip />
          <PanelTabs>
            {["part", "props", "config", "target", "ball"].map((name, i) => (
              <PanelTab key={name} aria-label={name} $active={i === 0}>
                <Icon name={name} />
              </PanelTab>
            ))}
            <PanelMore aria-label="More tabs">
              <svg width="8" height="10" viewBox="0 0 8 10">
                <path d="M2 1l4 4-4 4" {...line("#333", 1.8)} />
              </svg>
            </PanelMore>
          </PanelTabs>
          <FilterBox>
            <Icon name="filter" />
            <input type="text" aria-label="Filter tree" />
          </FilterBox>
          <TreeRoot>
            <Icon name="part" />
            <span>Part2&nbsp; (Default&lt;&lt;Default&gt;_Display S</span>
          </TreeRoot>
          <Tree>
            {TREE.map((node, i) => (
              <TreeRow key={i} $rollback={node.rollback}>
                <Twisty>
                  {node.arrow && (
                    <svg width="7" height="7" viewBox="0 0 7 7">
                      <path
                        d={node.arrow === "right" ? "M2 0l4 3.500L2 7z" : "M0 2h7L3.500 6z"}
                        fill="#555"
                      />
                    </svg>
                  )}
                </Twisty>
                <TreeLabel
                  $level={node.level}
                  $muted={node.muted}
                  $selected={selected === i}
                  onClick={() => setSelected(i)}
                >
                  <Icon name={node.icon} size={15} />
                  <span>{node.label}</span>
                </TreeLabel>
              </TreeRow>
            ))}
          </Tree>
          <ScrollBar>
            <svg width="8" height="10" viewBox="0 0 8 10">
              <path d="M6 1L2 5l4 4" {...line("#444", 1.6)} />
            </svg>
            <ScrollTrack>
              <ScrollThumb />
            </ScrollTrack>
            <svg width="8" height="10" viewBox="0 0 8 10">
              <path d="M2 1l4 4-4 4" {...line("#444", 1.6)} />
            </svg>
          </ScrollBar>
        </SidePanel>

        <Viewport>
          <Drawing />
          <PanelHandle aria-label="Toggle panel" />
          <Confirm>
            <svg width="56" height="46" viewBox="0 0 56 46">
              <path d="M17 1H1v12c0 5 2 7 7 7h9" {...line("#cfe2ee", 1.6)} />
              <path d="M18 20l8-8v4c5 0 8-1 9-4 0 7-3 11-9 11v4z" fill="#d3e7ee" stroke="#bdd5e0" />
              <path d="M38 27l15 15M53 27L38 42" {...line("#f0c4c4", 6)} />
            </svg>
          </Confirm>
          <ViewName>*Right</ViewName>
          <TaskPane>
            {["home", "library", "folderOpen", "palette", "ball", "props"].map(
              (name, i) => (
                <TaskButton key={name} aria-label={name} $active={i === 0}>
                  <Icon name={name} />
                </TaskButton>
              )
            )}
          </TaskPane>
        </Viewport>
      </Workspace>

      <FilterBar>
        <FilterStart>
          {["fOff", "fOffs", "fAll"].map((name) => (
            <IconButton key={name} aria-label={name}>
              <Icon name={name} />
            </IconButton>
          ))}
        </FilterStart>
        <SelectTool $small>
          <PressedButton aria-label="Select filter">
            <Icon name="cursor" />
          </PressedButton>
          <CaretButton aria-label="Filter options">
            <Caret />
          </CaretButton>
        </SelectTool>
        <WideIconButton aria-label="Invert selection">
          <Icon name="cursorDark" />
        </WideIconButton>
        <FilterList>
          {FILTERS.map((name) => (
            <IconButton key={name} aria-label={name}>
              <Icon name={name} />
            </IconButton>
          ))}
        </FilterList>
      </FilterBar>

      <StatusBar>
        <Product>SOLIDWORKS Premium 2021 SP3.0</Product>
        <Status $width={79}>-45.05mm</Status>
        <Status $width={64}>48.01mm</Status>
        <Status $width={45}>0mm</Status>
        <Status $width={93}>Under Defined</Status>
        <Status $width={181}>Editing Sketch2</Status>
        <Status $width={36}>MMGS</Status>
        <UnitsMore aria-label="Change units">
          <CaretUp />
        </UnitsMore>
        <Icon name="tag" size={14} />
      </StatusBar>
    </Page>
  );
};

export default App;

const GlobalStyle = createGlobalStyle`
  * {
    box-sizing: border-box;
  }
  body {
    margin: 0;
    background: #f7f7f7;
    overflow: hidden;
  }
  button {
    margin: 0;
    padding: 0;
    border: 0;
    background: none;
    font: inherit;
    color: inherit;
  }
  svg {
    flex: none;
    display: block;
  }
`;

const Page = styled.div`
  display: flex;
  flex-direction: column;
  height: 100vh;
  background: #f7f7f7;
  color: #262626;
  font-family: ${RIBBON_FONT};
  font-size: 11px;
`;

const Caret = styled.i`
  flex: none;
  width: 0;
  height: 0;
  border: 2px solid transparent;
  border-top: 3px solid #444;
  border-bottom: 0;
`;

const CaretUp = styled(Caret)`
  border-top: 0;
  border-bottom: 3px solid #444;
`;

const TitleBar = styled.header`
  display: flex;
  align-items: center;
  height: 32px;
  flex: none;
  border-top: 1px solid #999;
  border-bottom: 1px solid #aaa;
`;

const Brand = styled.div`
  display: flex;
  align-items: center;
  gap: 2px;
  width: 116px;
  padding-left: 4px;
  padding-bottom: 2px;
`;

const BrandName = styled.span`
  color: #dc3a30;
  font-style: italic;
  font-size: 11px;
`;

const Menu = styled.nav`
  display: flex;
  align-items: center;
  gap: 12px;
  width: 244px;
  height: 30px;
  padding-top: 3px;
  border-right: 1px solid #ccc;
`;

const MenuButton = styled.button`
  line-height: 16px;
`;

const IconButton = styled.button`
  display: flex;
  align-items: center;
  justify-content: center;
`;

const WideIconButton = styled(IconButton)`
  width: 26px;
`;

const QuickBar = styled.div`
  display: flex;
  align-items: center;
  padding-left: 19px;
`;

const QuickItem = styled.div`
  display: flex;
  align-items: center;
  gap: 9px;
  width: ${({ $width }) => $width}px;
`;

const SelectTool = styled.div`
  display: flex;
  width: ${({ $small }) => ($small ? 37 : 38)}px;
  height: ${({ $small }) => ($small ? 21 : 26)}px;
  border: 1px solid #999;
`;

const PressedButton = styled(IconButton)`
  width: 26px;
  background: #b2b2b2;
`;

const CaretButton = styled(IconButton)`
  flex: 1;
  background: #fff;
`;

const DocTitle = styled.div`
  flex: 1;
  padding-top: 2px;
  padding-left: 6px;
  text-align: center;
`;

const TitleRight = styled.div`
  display: flex;
  align-items: center;
`;

const SearchBox = styled.label`
  display: flex;
  align-items: center;
  gap: 6px;
  width: 202px;
  height: 23px;
  padding: 0 4px;
  border: 1px solid #c0c0c0;
  background: #fff;

  input {
    flex: 1;
    min-width: 0;
    border: 0;
    padding: 0;
    outline: 0;
    background: none;
    font: inherit;
  }
  input::placeholder {
    color: #707070;
  }
`;

const WindowButtons = styled.div`
  display: flex;
  gap: 17px;
  padding: 0 5px 0 11px;
`;

const Ribbon = styled.section`
  display: flex;
  height: 66px;
  flex: none;
  padding: 1px 0 2px 5px;
  border-bottom: 1px solid #b4b4b4;
`;

const Divider = styled.i`
  width: 1px;
  background: #d0d0d0;
`;

const ExitButton = styled.button`
  display: flex;
  flex-direction: column;
  width: 40px;
  border: 1px solid #aaa;
  background: #fff;
`;

const ExitFace = styled.span`
  display: flex;
  flex-direction: column;
  align-items: center;
  gap: 1px;
  width: 100%;
  height: 46px;
  padding-top: 3px;
  border-bottom: 1px solid #999;
  background: #b2b2b2;
  line-height: 15px;
`;

const ExitMore = styled.span`
  display: flex;
  flex: 1;
  width: 100%;
  align-items: center;
  justify-content: center;
`;

const Command = styled.button`
  display: flex;
  flex-direction: column;
  align-items: center;
  gap: 1px;
  width: ${({ $width }) => $width}px;
  padding-top: 4px;
  line-height: 15px;

  ${Caret} {
    margin-top: auto;
    margin-bottom: 6px;
  }

  ${({ $pressed }) =>
    $pressed &&
    css`
      background: #b2b2b2;
      border: 1px solid #8c8c8c;
      padding-top: 3px;
    `}

  &:disabled {
    color: #c0c0c0;
  }
`;

const ToolGrid = styled.div`
  display: grid;
  grid-template-columns: repeat(4, 32px);
  grid-template-rows: repeat(3, 21px);
  width: 119px;
  padding-left: 3px;
`;

const ToolCell = styled.button`
  display: flex;
  align-items: center;
  gap: 6px;
`;

const CommandList = styled.div`
  display: flex;
  flex-direction: column;
  width: 157px;
  padding-left: 2px;
`;

const ListCommand = styled.button`
  display: flex;
  align-items: center;
  gap: 7px;
  height: 21px;
  text-align: left;

  span {
    flex: 1;
  }
  ${Caret} {
    margin-right: 4px;
  }
`;

const Collapse = styled.button`
  margin: auto 4px 2px auto;
`;

const TabRow = styled.div`
  display: flex;
  height: 22px;
  flex: none;
  background: #fff;
`;

const Tabs = styled.div`
  display: flex;
`;

const Tab = styled.button`
  width: ${({ $width }) => $width}px;
  padding: 0 0 1px 1px;
  border-right: 1px solid #999;
  border-bottom: 1px solid #999;
  background: #d3d3d3;
  color: #404040;
  font-family: ${UI_FONT};
  font-size: 11px;

  ${({ $active }) =>
    $active &&
    css`
      background: #f7f7f7;
      border-bottom-color: #f7f7f7;
      color: #222;
      font-weight: 700;
    `}
`;

const Spacer = styled.div`
  flex: ${({ $grow }) => $grow};
`;

const HeadsUp = styled.div`
  display: flex;
  align-items: center;
  padding-top: 1px;

  ${Caret} {
    border-top-color: #999;
  }
`;

const HeadsUpItem = styled.button`
  display: flex;
  align-items: center;
  gap: 5px;
  width: ${({ $caret }) => ($caret ? 32 : 21)}px;
`;

const DocButtons = styled.div`
  display: flex;
  align-items: center;
  gap: 5px;
  padding: 1px 8px 0 0;
  opacity: 0.7;
`;

const Workspace = styled.main`
  display: flex;
  flex: 1;
  min-height: 0;
`;

const SidePanel = styled.aside`
  display: flex;
  flex-direction: column;
  width: 219px;
  flex: none;
  padding-right: 1px;
  border-left: 1px solid #ccc;
  border-right: 2px solid #c6c6c6;
  font-family: ${UI_FONT};
  font-size: 11px;
`;

const PanelGrip = styled.div`
  display: flex;
  align-items: center;
  justify-content: center;
  height: 20px;
  border-top: 1px solid #a9b8bd;
  border-bottom: 1px solid #d6d6d6;

  &::after {
    content: "";
    width: 5px;
    height: 5px;
    border-radius: 50%;
    border: 1px solid #999;
    background: #ccc;
  }
`;

const PanelTabs = styled.div`
  display: flex;
  margin-top: 3px;
  height: 21px;
  padding-left: 1px;
  border-bottom: 1px solid #bbb;
`;

const PanelTab = styled(IconButton)`
  width: 32px;
  height: 21px;
  border: 1px solid #bbb;
  border-left: 0;
  background: ${({ $active }) => ($active ? "#f7f7f7" : "#d3d3d3")};
  border-bottom-color: ${({ $active }) => ($active ? "#f7f7f7" : "#bbb")};
`;

const PanelMore = styled.button`
  margin: 0 4px 2px auto;
`;

const FilterBox = styled.label`
  display: flex;
  align-items: center;
  height: 26px;
  margin: 0 2px 0 3px;
  border: 1px solid #d8d8d8;

  input {
    flex: 1;
    min-width: 0;
    border: 0;
    background: none;
    outline: 0;
  }
`;

const TreeRoot = styled.div`
  display: flex;
  align-items: center;
  gap: 3px;
  height: 19px;
  padding-left: 2px;
  white-space: nowrap;
`;

const Tree = styled.ul`
  flex: 1;
  margin: 0;
  padding: 0;
  list-style: none;
`;

const TreeRow = styled.li`
  display: flex;
  align-items: center;
  height: 19px;

  &:nth-child(5n) {
    margin-bottom: 1px;
  }
  ${({ $rollback }) => $rollback && "box-shadow: 0 2px 0 #c4c0da;"}
`;

const Twisty = styled.span`
  width: 17px;
  padding-left: 5px;
`;

const TreeLabel = styled.button`
  display: flex;
  align-items: center;
  gap: 4px;
  height: 19px;
  margin-left: ${({ $level }) => ($level ? 19 : 0)}px;
  padding: 0 2px;
  border: 1px solid transparent;
  white-space: nowrap;
  color: ${({ $muted }) => ($muted ? "#909090" : "#262626")};

  ${({ $selected }) =>
    $selected &&
    css`
      background: #a3c7e3;
      border-color: #6fa5cc;
    `}
`;

const ScrollBar = styled.div`
  display: flex;
  align-items: center;
  height: 15px;
  margin-bottom: 3px;
  padding: 0 4px;
  gap: 4px;
  background: #f0f0f0;
`;

const ScrollTrack = styled.div`
  flex: 1;
  height: 15px;
`;

const ScrollThumb = styled.div`
  width: 83%;
  height: 15px;
  background: #cdcdcd;
`;

const Viewport = styled.section`
  position: relative;
  flex: 1;
  min-width: 0;
  background: #fff;
`;

const Canvas = styled.svg`
  width: 100%;
  height: 100%;
`;

const AxisText = styled.text`
  font-family: ${RIBBON_FONT};
  font-size: 9px;
`;

const PanelHandle = styled.button`
  position: absolute;
  left: -2px;
  top: 444px;
  display: flex;
  align-items: center;
  justify-content: center;
  width: 10px;
  height: 39px;
  background: #f7f7f7;
  border: 1px solid #aaa;
  border-left: 0;

  &::after {
    content: "";
    width: 4px;
    height: 4px;
    border-radius: 50%;
    border: 1px solid #999;
  }
`;

const Confirm = styled.div`
  position: absolute;
  right: 32px;
  top: 5px;
`;

const ViewName = styled.div`
  position: absolute;
  left: 8px;
  bottom: 0;
  font-family: Lato, sans-serif;
  font-size: 13px;
  font-weight: 700;
  line-height: 16px;
  color: #222;
`;

const TaskPane = styled.div`
  position: absolute;
  right: 0;
  top: 24px;
  display: flex;
  flex-direction: column;
  width: 27px;
  border: 1px solid #999;
  border-right: 0;
  border-bottom: 0;
`;

const TaskButton = styled(IconButton)`
  height: 24px;
  padding: 0 1px 1px 0;
  border-bottom: 1px solid #999;
  background: ${({ $active }) => ($active ? "#f7f7f7" : "#d3d3d3")};
`;

const FilterBar = styled.div`
  display: flex;
  align-items: center;
  height: 27px;
  flex: none;
  padding-left: 5px;
  border-bottom: 1px solid #b0b0b0;
`;

const FilterStart = styled.div`
  display: flex;
  gap: 6px;
  width: 65px;
  padding-left: 3px;
`;

const FilterList = styled.div`
  display: flex;
  width: 636px;
  height: 23px;
  padding: 0 6px 0 2px;
  border-left: 1px solid #bbb;
  border-right: 1px solid #999;

  ${IconButton} {
    flex: 1;
  }
`;

const StatusBar = styled.footer`
  display: flex;
  align-items: center;
  height: 17px;
  flex: none;
  padding: 1px 3px 0 1px;
  font-family: ${UI_FONT};
`;

const Product = styled.span`
  flex: 1;
`;

const Status = styled.span`
  width: ${({ $width }) => $width}px;
  white-space: nowrap;
`;

const UnitsMore = styled.button`
  display: flex;
  justify-content: center;
  width: 44px;
`;
